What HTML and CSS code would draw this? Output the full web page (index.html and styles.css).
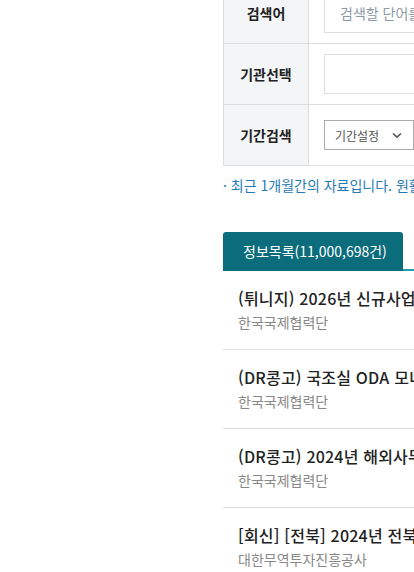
FILE: index.html
```html
<!DOCTYPE html>
<html lang="ko">
<head>
    <meta charset="UTF-8">
    <meta name="viewport" content="width=device-width, initial-scale=1.0">
    <title>정보목록</title>
    <link rel="stylesheet" href="styles.css">
</head>
<body>
    <div class="page">
        <div class="search-table">
            <div class="row">
                <div class="label">검색어</div>
                <div class="field">
                    <input type="text" class="text-input" placeholder="검색할 단어를 입력하세요">
                </div>
            </div>
            <div class="row">
                <div class="label">기관선택</div>
                <div class="field">
                    <input type="text" class="text-input">
                </div>
            </div>
            <div class="row">
                <div class="label">기간검색</div>
                <div class="field">
                    <div class="select">
                        <span>기간설정</span>
                        <svg width="10" height="7" viewBox="0 0 10 7"><path d="M1 1.5 L5 5.2 L9 1.5" fill="none" stroke="#555" stroke-width="1.6"/></svg>
                    </div>
                </div>
            </div>
        </div>

        <p class="notice">· 최근 1개월간의 자료입니다. 원활한 검색을 위해 기간을 설정해 주세요.</p>

        <div class="tabs">
            <div class="tab">정보목록(11,000,698건)</div>
            <div class="tab-line"></div>
        </div>

        <ul class="list">
            <li class="item">
                <p class="title">(튀니지) 2026년 신규사업(안) 발굴을 위한 현지 조사 용역 공고</p>
                <p class="org">한국국제협력단</p>
            </li>
            <li class="item">
                <p class="title">(DR콩고) 국조실 ODA 모니터링 현지 조사 용역 공고</p>
                <p class="org">한국국제협력단</p>
            </li>
            <li class="item">
                <p class="title">(DR콩고) 2024년 해외사무소 현지직원 채용 공고</p>
                <p class="org">한국국제협력단</p>
            </li>
            <li class="item">
                <p class="title">[회신] [전북] 2024년 전북 수출기업 해외시장 정보 요청</p>
                <p class="org">대한무역투자진흥공사</p>
            </li>
        </ul>
    </div>
</body>
</html>
```

FILE: styles.css
```css
* {
    margin: 0;
    padding: 0;
    box-sizing: border-box;
}

body {
    font-family: "Noto Sans CJK KR", "Noto Sans", sans-serif;
    background: #ffffff;
    color: #222;
    overflow: hidden;
}

.page {
    width: 900px;
    padding-left: 223px;
}

.search-table {
    margin-top: -19px;
    border: 1px solid #dddddd;
    border-top: none;
}

.row {
    display: grid;
    grid-template-columns: 85px 1fr;
    height: 61px;
    border-top: 1px solid #dddddd;
}

.row:first-child {
    height: 62px;
}

.label {
    display: flex;
    align-items: center;
    justify-content: center;
    background: #f4f5f7;
    border-right: 1px solid #dddddd;
    font-size: 14px;
    font-weight: bold;
    color: #222;
}

.field {
    display: flex;
    align-items: center;
    padding-left: 15px;
}

.text-input {
    width: 400px;
    height: 40px;
    border: 1px solid #dddddd;
    padding: 0 15px;
    font-family: inherit;
    font-size: 14px;
    outline: none;
}

.text-input::placeholder {
    color: #8c9aa6;
}

.select {
    width: 90px;
    height: 30px;
    border: 1px solid #aaaaaa;
    display: flex;
    align-items: center;
    justify-content: space-between;
    padding: 0 11px 0 10px;
    font-size: 12px;
    color: #555;
}

.notice {
    margin-top: 9px;
    font-size: 14px;
    line-height: 20px;
    color: #1f7bb3;
    white-space: nowrap;
}

.tabs {
    display: flex;
    align-items: flex-end;
    margin-top: 37px;
}

.tab {
    width: 180px;
    height: 39px;
    background: #0b6c7c;
    border-radius: 3px 3px 0 0;
    color: #ffffff;
    font-size: 14px;
    line-height: 39px;
    padding-left: 20px;
    white-space: nowrap;
}

.tab-line {
    flex: 1;
    height: 2px;
    background: #1e9db2;
}

.list {
    list-style: none;
}

.item {
    padding: 16px 15px 16px;
    border-bottom: 1px solid #dddddd;
    white-space: nowrap;
}

.title {
    font-size: 16px;
    line-height: 22px;
    font-weight: 500;
    letter-spacing: 0.2px;
    color: #222;
}

.org {
    margin-top: 2px;
    font-size: 14px;
    line-height: 22px;
    color: #888888;
}
```
